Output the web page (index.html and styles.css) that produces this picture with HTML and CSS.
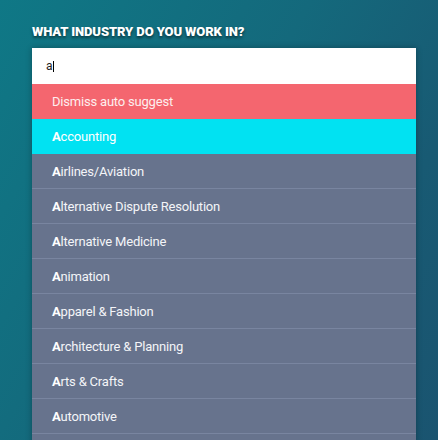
FILE: index.html
```html
<!DOCTYPE html>
<html lang="en">
<head>
<meta charset="utf-8">
<title>Industry</title>
<link rel="stylesheet" href="styles.css">
</head>
<body>
<div class="field">
  <label class="label">What industry do you work in?</label>
  <div class="box">
    <div class="input"><span class="typed">a</span><span class="caret"></span></div>
    <ul class="list">
      <li class="item dismiss">Dismiss auto suggest</li>
      <li class="item active"><b>A</b>ccounting</li>
      <li class="item"><b>A</b>irlines/Aviation</li>
      <li class="item"><b>A</b>lternative Dispute Resolution</li>
      <li class="item"><b>A</b>lternative Medicine</li>
      <li class="item"><b>A</b>nimation</li>
      <li class="item"><b>A</b>pparel &amp; Fashion</li>
      <li class="item"><b>A</b>rchitecture &amp; Planning</li>
      <li class="item"><b>A</b>rts &amp; Crafts</li>
      <li class="item"><b>A</b>utomotive</li>
      <li class="item"></li>
    </ul>
  </div>
</div>
</body>
</html>
```

FILE: styles.css
```css
html, body {
  margin: 0;
  height: 100%;
}
body {
  background: linear-gradient(120deg, #0f7886 0%, #14697c 45%, #185a73 75%, #1a5470 100%);
  font-family: Roboto, "Noto Sans", "Liberation Sans", sans-serif;
  overflow: hidden;
  padding: 24px 22px 0 32px;
  box-sizing: border-box;
}
.field {
  display: flex;
  flex-direction: column;
}
.label {
  display: block;
  color: #ffffff;
  font-weight: 900;
  font-size: 13px;
  line-height: 16px;
  letter-spacing: -0.1px;
  text-transform: uppercase;
  text-shadow: 0 2px 3px rgba(0, 0, 0, 0.55);
  margin-bottom: 8px;
}
.box {
  box-shadow: 0 0 6px rgba(0, 0, 0, 0.3);
}
.input {
  background: #ffffff;
  height: 36px;
  padding-left: 14px;
  display: flex;
  align-items: center;
  font-size: 12px;
  color: #222;
}
.caret {
  display: inline-block;
  width: 1px;
  height: 11px;
  background: #000;
}
.list {
  list-style: none;
  margin: 0;
  padding: 0;
}
.item {
  height: 34px;
  line-height: 35px;
  padding-left: 20px;
  font-size: 13px;
  letter-spacing: -0.2px;
  color: #f4f5f8;
  background: #67738d;
  border-bottom: 1px solid #7985a0;
  white-space: nowrap;
}
.item b {
  font-weight: 700;
  color: #ffffff;
}
.dismiss {
  background: #f4666f;
  color: #fdeeee;
  height: 35px;
  border-bottom: 0;
}
.active {
  background: #01e2f2;
  color: #ffffff;
  height: 35px;
  border-bottom: 0;
}
```
